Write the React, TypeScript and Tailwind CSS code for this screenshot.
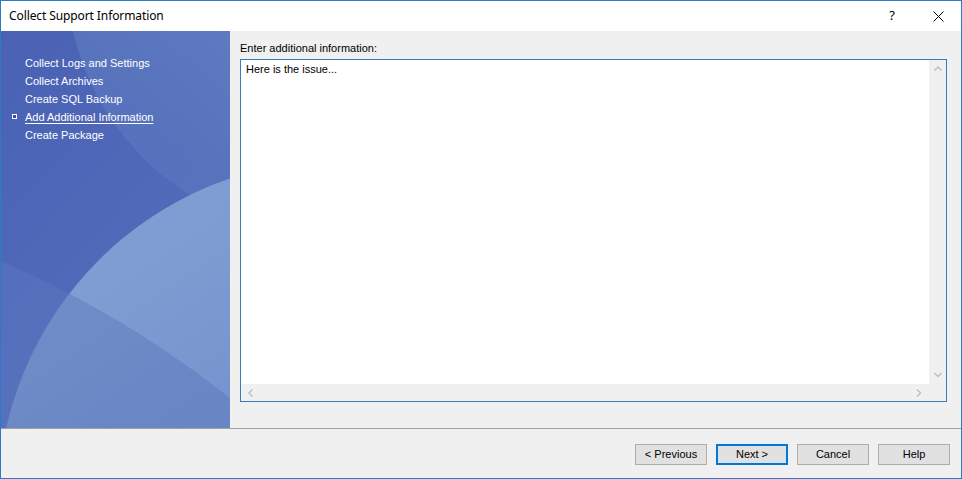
import React from "react";

function Chevron({ dir }: { dir: "up" | "down" | "left" | "right" }) {
  const pts: Record<string, string> = {
    up: "0.5,4.5 4,1 7.5,4.5",
    down: "0.5,1 4,4.5 7.5,1",
    left: "4.5,0.5 1,4 4.5,7.5",
    right: "1,0.5 4.5,4 1,7.5",
  };
  const vertical = dir === "up" || dir === "down";
  return (
    <svg width={vertical ? 8 : 6} height={vertical ? 6 : 8} viewBox={vertical ? "0 0 8 6" : "0 0 6 8"}>
      <polyline points={pts[dir]} fill="none" stroke="#bcbcbc" strokeWidth="1.3" />
    </svg>
  );
}

function PanelBackground() {
  return (
    <svg className="absolute inset-0" width="229" height="397" viewBox="0 0 229 397" preserveAspectRatio="none">
      <defs>
        <linearGradient id="base" x1="0" y1="0" x2="0.6" y2="1">
          <stop offset="0" stopColor="#4a61b4" />
          <stop offset="0.5" stopColor="#4f68b8" />
          <stop offset="1" stopColor="#5570bc" />
        </linearGradient>
        <linearGradient id="topr" x1="1" y1="0" x2="0.3" y2="0.9">
          <stop offset="0" stopColor="#7e9bd1" />
          <stop offset="1" stopColor="#5874bd" />
        </linearGradient>
        <linearGradient id="big" x1="0.2" y1="0.15" x2="0.7" y2="0.9">
          <stop offset="0" stopColor="#7e9dd2" />
          <stop offset="0.55" stopColor="#6d8cca" />
          <stop offset="1" stopColor="#5873bf" />
        </linearGradient>
        <clipPath id="bigClip">
          <circle cx="340" cy="472" r="343" />
        </clipPath>
      </defs>
      <rect x="0" y="0" width="229" height="397" fill="url(#base)" />
      <circle cx="330" cy="-60" r="265" fill="url(#topr)" opacity="0.9" />
      <circle cx="-410" cy="1176" r="1031" fill="#6a89c9" opacity="0.22" />
      <circle cx="340" cy="472" r="343" fill="url(#big)" />
      <g clipPath="url(#bigClip)">
        <circle cx="-410" cy="1176" r="1031" fill="#3d52a6" opacity="0.22" />
      </g>
    </svg>
  );
}

const steps = [
  "Collect Logs and Settings",
  "Collect Archives",
  "Create SQL Backup",
  "Add Additional Information",
  "Create Package",
];

function Btn({ label, primary }: { label: string; primary?: boolean }) {
  return (
    <div
      className={
        primary
          ? "w-[72px] h-[21px] border-2 border-[#0078d7] bg-[#e1e1e1] flex items-center justify-center text-[11px] text-black"
          : "w-[72px] h-[21px] border border-[#adadad] bg-[#e1e1e1] flex items-center justify-center text-[11px] text-black"
      }
    >
      {label}
    </div>
  );
}

export default function App() {
  return (
    <div className="w-[962px] h-[479px] border border-[#2b7bc9] bg-[#f0f0f0] flex flex-col overflow-hidden font-['Liberation_Sans',Arial,sans-serif] text-black">
      {/* Title bar */}
      <div className="h-[30px] bg-white flex items-center justify-between shrink-0">
        <div className="pl-[8px] text-[12px] font-['Noto_Sans',sans-serif] text-black leading-none tracking-[-0.1px]">
          Collect Support Information
        </div>
        <div className="flex h-full">
          <div className="w-[46px] h-full flex items-center justify-center text-[13px] font-['Noto_Sans',sans-serif]">?</div>
          <div className="w-[46px] h-full flex items-center justify-center">
            <svg width="11" height="11" viewBox="0 0 11 11">
              <line x1="0.5" y1="0.5" x2="10.5" y2="10.5" stroke="#000" strokeWidth="1" />
              <line x1="10.5" y1="0.5" x2="0.5" y2="10.5" stroke="#000" strokeWidth="1" />
            </svg>
          </div>
        </div>
      </div>

      {/* Main */}
      <div className="flex h-[397px] shrink-0">
        <div className="relative w-[229px] h-full overflow-hidden">
          <PanelBackground />
          <div className="relative pt-[23px] pl-[24px] text-[11px] leading-[18px] text-white">
            {steps.map((s, i) => (
              <div key={s} className="relative h-[18px] flex items-center">
                {i === 3 && (
                  <span className="absolute left-[-13px] top-[6px] w-[5px] h-[5px] border border-white bg-[#3d4f95]" />
                )}
                <span className={i === 3 ? "underline underline-offset-[2px] decoration-1" : ""}>{s}</span>
              </div>
            ))}
          </div>
        </div>

        <div className="flex-1 pl-[10px] pt-[10px]">
          <div className="h-[14px] leading-[14px] text-[11px]">Enter additional information:</div>
          <div className="mt-[4px] w-[707px] h-[343px] border border-[#3d7db3] bg-white flex flex-col">
            <div className="flex-1 flex min-h-0">
              <div className="flex-1 pl-[5px] pt-[2px] text-[11px] leading-[14px]">Here is the issue...</div>
              <div className="w-[17px] bg-[#f0f0f0] flex flex-col items-center justify-between py-[6px]">
                <Chevron dir="up" />
                <Chevron dir="down" />
              </div>
            </div>
            <div className="h-[17px] flex shrink-0">
              <div className="flex-1 bg-[#f0f0f0] flex items-center justify-between px-[7px]">
                <Chevron dir="left" />
                <Chevron dir="right" />
              </div>
              <div className="w-[17px] bg-[#f0f0f0]" />
            </div>
          </div>
        </div>
      </div>

      <div className="h-px bg-[#a0a0a0] shrink-0" />

      {/* Buttons */}
      <div className="flex-1 flex justify-end items-start gap-[9px] pr-[11px] pt-[15px]">
        <Btn label="< Previous" />
        <Btn label="Next >" primary />
        <Btn label="Cancel" />
        <Btn label="Help" />
      </div>
    </div>
  );
}
